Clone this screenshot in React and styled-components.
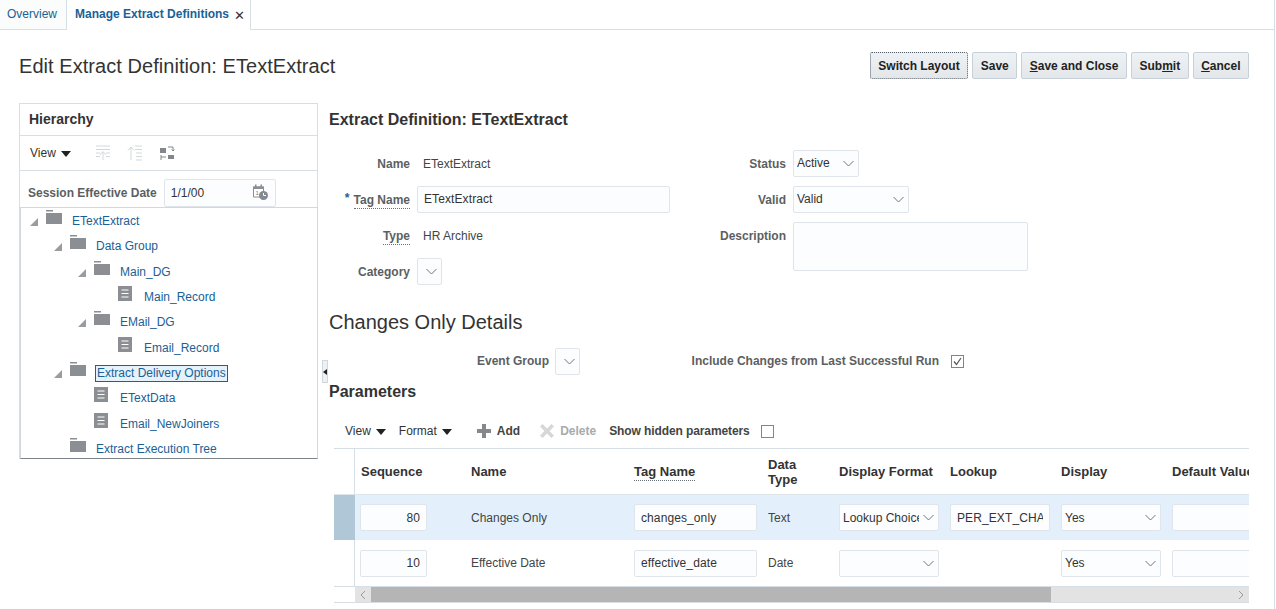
import styled, { createGlobalStyle } from "styled-components";

const GlobalStyle = createGlobalStyle`
  html, body {
    margin: 0;
    height: 609px;
    overflow: hidden;
    background: #fff;
    font-family: "Liberation Sans", Arial, sans-serif;
    font-size: 12px;
    color: #333;
  }
`;

const linkBlue = "#1a6196";
const line = "#d6dfe6";
const fieldLine = "#dfe5ea";

const Page = styled.div`
  width: 1274px;
  height: 609px;
  border-right: 1px solid ${line};
  overflow: hidden;
`;

const TabBar = styled.div`
  display: flex;
  height: 29px;
  border-bottom: 1px solid ${line};
`;

const Tab = styled.div`
  display: flex;
  align-items: center;
  height: ${(p) => (p.$active ? "30px" : "29px")};
  padding: ${(p) => (p.$active ? "0 5px 2px 8px" : "0 9px 2px 7px")};
  box-sizing: border-box;
  color: ${linkBlue};
  font-weight: ${(p) => (p.$active ? 700 : 400)};
  background: ${(p) => (p.$active ? "#fff" : "#fbfcfc")};
  border-left: ${(p) => (p.$active ? `1px solid ${line}` : "none")};
  border-right: ${(p) => (p.$active ? `1px solid ${line}` : "none")};
`;

const TabClose = styled.span`
  margin-left: 5px;
  margin-top: 3px;
  color: #333;
  font-size: 13px;
  font-weight: 400;
`;

const Header = styled.div`
  display: flex;
  align-items: center;
  justify-content: space-between;
  height: 27px;
  padding: 22px 25px 24px 19px;
`;

const Title = styled.h1`
  margin: 0;
  padding-top: 1px;
  font-size: 20px;
  font-weight: 400;
  letter-spacing: 0.05px;
  color: #333;
`;

const ButtonRow = styled.div`
  display: flex;
  gap: 4px;
`;

const Button = styled.button`
  height: 27px;
  padding: 0 7.5px;
  box-sizing: border-box;
  font: 700 12px "Liberation Sans", Arial, sans-serif;
  color: #222;
  background: linear-gradient(#eff2f4, #e3e7ea);
  border: 1px ${(p) => (p.$focused ? "dotted #55606a" : "solid #c7d0d8")};
  border-radius: 2px;
`;

const Body = styled.div`
  display: flex;
  padding-left: 19px;
`;

const LeftPanel = styled.div`
  width: 299px;
  height: 356px;
  box-sizing: border-box;
  border: 1px solid ${line};
  border-bottom: none;
  flex-shrink: 0;
`;

const PanelTitle = styled.div`
  display: flex;
  align-items: center;
  height: 32px;
  padding: 0 0 1px 9px;
  box-sizing: border-box;
  border-bottom: 1px solid ${line};
  font-size: 14px;
  font-weight: 700;
  color: #333;
`;

const PanelTools = styled.div`
  display: flex;
  align-items: center;
  height: 35px;
  padding-left: 10px;
  box-sizing: border-box;
  border-bottom: 1px solid ${line};
`;

const Menu = styled.span`
  display: inline-flex;
  align-items: center;
  gap: 5px;
  color: #333;
  margin-right: ${(p) => p.$gap || 0}px;
`;

const Caret = styled.i`
  display: inline-block;
  border-style: solid;
  border-width: 6px 5px 0;
  border-color: #222 transparent transparent;
  margin-top: 2px;
`;

const ToolIcon = styled.svg`
  width: 16px;
  height: 16px;
  margin-right: 16px;
`;

const DateRow = styled.div`
  display: flex;
  align-items: center;
  height: 36px;
  padding: 7px 0 0 8px;
  box-sizing: border-box;
`;

const BoldLabel = styled.span`
  font-weight: 700;
  color: #5c5f62;
`;

const DateField = styled.div`
  display: flex;
  align-items: center;
  justify-content: space-between;
  width: 112px;
  height: 28px;
  margin-left: 7px;
  padding: 0 6px;
  box-sizing: border-box;
  background: #fcfdfe;
  border: 1px solid ${fieldLine};
  border-radius: 2px;
`;

const Tree = styled.ul`
  position: relative;
  list-style: none;
  margin: 0 -1px 0 0;
  padding: 1px 0 0;
  height: 249px;
  overflow: hidden;
  background: #fff;
  border: 1px solid #d2d9de;
  border-bottom: 1px solid #7d858b;
`;

const TreeRow = styled.li`
  display: flex;
  align-items: flex-start;
  height: 25.35px;
  padding-left: ${(p) => 9 + p.$depth * 24}px;
  box-sizing: border-box;
`;

const Expander = styled.svg`
  width: 8px;
  height: 8px;
  margin: 9px 8px 0 0;
  flex-shrink: 0;
  visibility: ${(p) => (p.$hidden ? "hidden" : "visible")};
`;

const NodeIcon = styled.svg`
  flex-shrink: 0;
  width: 16px;
  height: 15px;
  margin: 1px 10px 0 0;
`;

const NodeText = styled.span`
  color: ${linkBlue};
  line-height: 15px;
  margin-top: 5px;
  padding: ${(p) => (p.$selected ? "0 1px" : "0")};
  white-space: nowrap;
  outline: ${(p) => (p.$selected ? `1px solid ${linkBlue}` : "none")};
  background: ${(p) => (p.$selected ? "#e6f2fb" : "none")};
`;

const SplitHandle = styled.div`
  flex-shrink: 0;
  display: flex;
  align-items: center;
  width: 6px;
  height: 23px;
  margin: 257px 0 0 4px;
  background: #eef1f4;
  border: 1px solid #cfd6dc;
  box-sizing: border-box;
  &::after {
    content: "";
    border-style: solid;
    border-width: 3px 4px 3px 0;
    border-color: transparent #222 transparent transparent;
  }
`;

const RightPane = styled.div`
  width: 920px;
  margin-left: 1px;
  flex-shrink: 0;
`;

const SectionTitle = styled.h2`
  margin: 1px 0 0;
  height: 32px;
  line-height: 32px;
  font-size: 16px;
  font-weight: 700;
  color: #333;
`;

const FieldLabel = styled.span`
  text-align: right;
  font-weight: 700;
  color: #5c5f62;
  white-space: nowrap;
`;

const HelpLabel = styled.span`
  border-bottom: 1px dotted #6b7378;
  padding-bottom: 1px;
`;

const Required = styled.span`
  color: ${linkBlue};
  margin-right: 4px;
  position: relative;
  top: -2px;
`;

const Value = styled.span`
  padding-left: 6px;
  color: #444;
`;

const TextInput = styled.input`
  display: block;
  width: ${(p) => p.$w}px;
  height: 27px;
  padding: 0 6px;
  box-sizing: border-box;
  font: 12px "Liberation Sans", Arial, sans-serif;
  letter-spacing: 0.1px;
  text-align: ${(p) => p.$align || "left"};
  color: #333;
  background: #fcfdfe;
  border: 1px solid ${fieldLine};
  border-radius: 2px;
  outline: none;
`;

const SelectBox = styled.div`
  display: flex;
  align-items: center;
  justify-content: space-between;
  width: ${(p) => p.$w}px;
  height: 27px;
  padding: 0 4px 0 3px;
  box-sizing: border-box;
  color: #333;
  background: #fcfdfe;
  border: 1px solid ${fieldLine};
  border-radius: 2px;
  overflow: hidden;
  white-space: nowrap;
`;

const SelectText = styled.span`
  overflow: hidden;
  width: ${(p) => (p.$clip ? "76px" : "auto")};
`;

const Chevron = styled.svg`
  width: 11px;
  height: 7px;
  flex-shrink: 0;
  margin-left: auto;
`;

const FormGrid = styled.div`
  display: grid;
  grid-template-columns: 81px 283px 79px auto;
  grid-auto-rows: 36px;
  column-gap: 7px;
  align-items: center;
  margin-top: 10px;
  & > ${TextInput}, & > ${SelectBox} {
    margin-bottom: 2px;
  }
`;

const DescriptionBox = styled.div`
  grid-row: span 2;
  align-self: start;
  width: 235px;
  height: 49px;
  margin-top: 4px;
  box-sizing: border-box;
  background: #fcfdfe;
  border: 1px solid ${fieldLine};
  border-radius: 2px;
`;

const LargeTitle = styled.h2`
  margin: 20px 0 0;
  height: 24px;
  line-height: 24px;
  font-size: 20px;
  font-weight: 400;
  color: #333;
`;

const EventRow = styled.div`
  display: flex;
  align-items: center;
  height: 28px;
  margin-top: 13px;
`;

const EventLabel = styled(BoldLabel)`
  width: ${(p) => p.$w}px;
  margin-right: ${(p) => p.$mr}px;
  text-align: right;
  white-space: nowrap;
`;

const Checkbox = styled.span`
  display: inline-flex;
  width: 13px;
  height: 13px;
  box-sizing: border-box;
  background: #fff;
  border: 1px solid #7f868b;
`;

const ParamsTitle = styled(SectionTitle)`
  height: 20px;
  line-height: 20px;
  margin-top: 7px;
`;

const TableTools = styled.div`
  display: flex;
  align-items: center;
  height: 34px;
  margin: 12px 0 0 5px;
  padding-left: 11px;
`;

const ToolAction = styled.span`
  display: inline-flex;
  align-items: center;
  gap: 6px;
  font-weight: 700;
  letter-spacing: ${(p) => p.$ls || 0}px;
  color: ${(p) => (p.$off ? "#a8abad" : "#444")};
  margin-right: ${(p) => p.$gap}px;
`;

const Table = styled.div`
  width: 915px;
  margin-left: 5px;
  border-top: 1px solid ${line};
  overflow: hidden;
`;

const Row = styled.div`
  display: grid;
  grid-template-columns: 21px 110px 163px 134px 71px 111px 111px 111px 120px;
  align-items: center;
  height: ${(p) => p.$h}px;
  background: ${(p) => (p.$selected ? "#e3f0fb" : "#fff")};
  border-bottom: ${(p) => (p.$head ? "1px solid #dde5eb" : "none")};
  box-sizing: border-box;
`;

const Selector = styled.div`
  align-self: stretch;
  background: ${(p) => (p.$selected ? "#b0c7d8" : "#fff")};
  border-right: 1px solid ${(p) => (p.$selected ? "#b0c7d8" : line)};
`;

const HeadCell = styled.div`
  padding-left: 6px;
  font-weight: 700;
  font-size: 13px;
  line-height: 15px;
  color: #333;
  white-space: nowrap;
`;

const Cell = styled.div`
  padding-left: ${(p) => p.$pad ?? 6}px;
  color: #444;
`;

const ScrollRow = styled.div`
  display: flex;
  height: 17px;
  border-top: 1px solid ${line};
  border-bottom: 1px solid ${line};
  box-sizing: border-box;
`;

const ScrollCorner = styled.div`
  width: 21px;
  flex-shrink: 0;
  background: #fff;
`;

const ScrollEnd = styled.div`
  display: flex;
  align-items: center;
  justify-content: center;
  width: ${(p) => p.$w}px;
  background: #e3e3e3;
`;

const ScrollThumb = styled.div`
  width: 680px;
  background: #b5b5b5;
`;

const ScrollTrack = styled.div`
  flex: 1;
  display: flex;
  align-items: center;
  justify-content: flex-end;
  padding-right: 5px;
  background: #e3e3e3;
`;

const treeNodes = [
  { depth: 0, kind: "folder", open: true, label: "ETextExtract" },
  { depth: 1, kind: "folder", open: true, label: "Data Group" },
  { depth: 2, kind: "folder", open: true, label: "Main_DG" },
  { depth: 3, kind: "doc", label: "Main_Record" },
  { depth: 2, kind: "folder", open: true, label: "EMail_DG" },
  { depth: 3, kind: "doc", label: "Email_Record" },
  { depth: 1, kind: "folder", open: true, label: "Extract Delivery Options", selected: true },
  { depth: 2, kind: "doc", label: "ETextData" },
  { depth: 2, kind: "doc", label: "Email_NewJoiners" },
  { depth: 1, kind: "folder", label: "Extract Execution Tree" },
];

const Arrow = () => (
  <Chevron viewBox="0 0 11 7">
    <path d="M.5 1l5 5 5-5" fill="none" stroke="#6f777d" strokeWidth="1" />
  </Chevron>
);

const Select = ({ w, text, clip }) => (
  <SelectBox $w={w}>
    {text && <SelectText $clip={clip}>{text}</SelectText>}
    <Arrow />
  </SelectBox>
);

const FolderIcon = () => (
  <NodeIcon viewBox="0 0 16 15">
    <path d="M0 0h7v1.5H0z M0 3h16V14H0z" fill="#8b8e93" />
  </NodeIcon>
);

const DocIcon = () => (
  <NodeIcon viewBox="0 0 16 15">
    <rect x="0" y="0" width="14" height="15" fill="#8b8e93" />
    <path d="M3.5 4h7M3.5 7.5h7M3.5 11h7" stroke="#fff" strokeWidth="1" />
  </NodeIcon>
);

const CalendarIcon = () => (
  <svg width="17" height="17" viewBox="0 0 17 17">
    <path d="M1.5 3h10v10h-10z" fill="#fff" stroke="#8b8e93" />
    <path d="M1 2.5h11V5H1z M3 .5h1.5V3H3z M8.5 .5H10V3H8.5z" fill="#8b8e93" />
    <text x="3.5" y="11" fontSize="6" fontFamily="Liberation Sans" fill="#777">1</text>
    <circle cx="11.5" cy="11.5" r="4.5" fill="#85898d" />
    <path d="M11.5 9v2.5h2.5" fill="none" stroke="#fff" />
  </svg>
);

const App = () => {
  return (
    <Page>
      <GlobalStyle />
      <TabBar>
        <Tab>Overview</Tab>
        <Tab $active>
          Manage Extract Definitions
          <TabClose>✕</TabClose>
        </Tab>
      </TabBar>

      <Header>
        <Title>Edit Extract Definition: ETextExtract</Title>
        <ButtonRow>
          <Button $focused>Switch Layout</Button>
          <Button>Save</Button>
          <Button><u>S</u>ave and Close</Button>
          <Button>Sub<u>m</u>it</Button>
          <Button><u>C</u>ancel</Button>
        </ButtonRow>
      </Header>

      <Body>
        <LeftPanel>
          <PanelTitle>Hierarchy</PanelTitle>
          <PanelTools>
            <Menu $gap={24}>View <Caret /></Menu>
            <ToolIcon viewBox="0 0 16 16">
              <path d="M1 1h14M1 4.5h14M11 8h4M11 11.5h4M1 8h4M1 11.5h4M8 15V7M5 10l3-3.5 3 3.5" stroke="#d4d7d9" fill="none" />
            </ToolIcon>
            <ToolIcon viewBox="0 0 16 16">
              <path d="M8 1h7M8 4.5h7M9 8h6M9 11.5h6M9 15h6M4 15V2M1 5.5L4 2l3 3.5" stroke="#d4d7d9" fill="none" />
            </ToolIcon>
            <ToolIcon viewBox="0 0 16 16">
              <path d="M1 3h6v5H1z M9 10h6v4H9z" fill="#83878b" />
              <path d="M9 2h5v4M12.5 4.5L14 6l1.5-1.5M2 10v5M2 12h5" stroke="#83878b" fill="none" />
            </ToolIcon>
          </PanelTools>
          <DateRow>
            <BoldLabel>Session Effective Date</BoldLabel>
            <DateField>
              1/1/00
              <CalendarIcon />
            </DateField>
          </DateRow>
          <Tree>
            {treeNodes.map((node) => (
              <TreeRow key={node.label} $depth={node.depth}>
                <Expander viewBox="0 0 8 8" $hidden={!node.open}>
                  <path d="M8 0v8H0z" fill="#9a9da0" />
                </Expander>
                {node.kind === "folder" ? <FolderIcon /> : <DocIcon />}
                <NodeText $selected={node.selected}>{node.label}</NodeText>
              </TreeRow>
            ))}
          </Tree>
        </LeftPanel>

        <SplitHandle />

        <RightPane>
          <SectionTitle>Extract Definition: ETextExtract</SectionTitle>
          <FormGrid>
            <FieldLabel>Name</FieldLabel>
            <Value>ETextExtract</Value>
            <FieldLabel>Status</FieldLabel>
            <Select w={66} text="Active" />

            <FieldLabel>
              <Required>*</Required>
              <HelpLabel>Tag Name</HelpLabel>
            </FieldLabel>
            <TextInput $w={253} defaultValue="ETextExtract" />
            <FieldLabel>Valid</FieldLabel>
            <Select w={116} text="Valid" />

            <FieldLabel>
              <HelpLabel>Type</HelpLabel>
            </FieldLabel>
            <Value>HR Archive</Value>
            <FieldLabel>Description</FieldLabel>
            <DescriptionBox />

            <FieldLabel>Category</FieldLabel>
            <Select w={25} />
          </FormGrid>

          <LargeTitle>Changes Only Details</LargeTitle>
          <EventRow>
            <EventLabel $w={220} $mr={6}>Event Group</EventLabel>
            <Select w={25} />
            <EventLabel $w={359} $mr={12}>Include Changes from Last Successful Run</EventLabel>
            <Checkbox>
              <svg width="11" height="11" viewBox="0 0 11 11">
                <path d="M2 5.5l2.5 3L9 2" fill="none" stroke="#555" strokeWidth="1.2" />
              </svg>
            </Checkbox>
          </EventRow>

          <ParamsTitle>Parameters</ParamsTitle>
          <TableTools>
            <Menu $gap={13}>View <Caret /></Menu>
            <Menu $gap={25}>Format <Caret /></Menu>
            <ToolAction $gap={20}>
              <svg width="14" height="14" viewBox="0 0 14 14">
                <path d="M5 0h4v5h5v4H9v5H5V9H0V5h5z" fill="#85898c" />
              </svg>
              Add
            </ToolAction>
            <ToolAction $off $gap={13}>
              <svg width="14" height="14" viewBox="0 0 14 14">
                <path d="M2.5 0L7 4.5 11.5 0 14 2.5 9.5 7l4.5 4.5-2.5 2.5L7 9.5 2.5 14 0 11.5 4.5 7 0 2.5z" fill="#d5d7d9" />
              </svg>
              Delete
            </ToolAction>
            <ToolAction $gap={11} $ls={-0.1}>Show hidden parameters</ToolAction>
            <Checkbox />
          </TableTools>

          <Table>
            <Row $h={46} $head>
              <Selector />
              <HeadCell>Sequence</HeadCell>
              <HeadCell>Name</HeadCell>
              <HeadCell><HelpLabel>Tag Name</HelpLabel></HeadCell>
              <HeadCell>Data<br />Type</HeadCell>
              <HeadCell>Display Format</HeadCell>
              <HeadCell>Lookup</HeadCell>
              <HeadCell>Display</HeadCell>
              <HeadCell>Default Value</HeadCell>
            </Row>
            <Row $h={45} $selected>
              <Selector $selected />
              <Cell $pad={5}><TextInput $w={67} $align="right" defaultValue="80" /></Cell>
              <Cell>Changes Only</Cell>
              <Cell><TextInput $w={123} defaultValue="changes_only" /></Cell>
              <Cell>Text</Cell>
              <Cell><Select w={100} text="Lookup Choices" clip /></Cell>
              <Cell><TextInput $w={100} defaultValue="PER_EXT_CHANGES" /></Cell>
              <Cell><Select w={100} text="Yes" /></Cell>
              <Cell><TextInput $w={100} /></Cell>
            </Row>
            <Row $h={46}>
              <Selector />
              <Cell $pad={5}><TextInput $w={67} $align="right" defaultValue="10" /></Cell>
              <Cell>Effective Date</Cell>
              <Cell><TextInput $w={123} defaultValue="effective_date" /></Cell>
              <Cell>Date</Cell>
              <Cell><Select w={100} /></Cell>
              <Cell />
              <Cell><Select w={100} text="Yes" /></Cell>
              <Cell><TextInput $w={100} /></Cell>
            </Row>
            <ScrollRow>
              <ScrollCorner />
              <ScrollEnd $w={16}>
                <svg width="6" height="10" viewBox="0 0 6 10">
                  <path d="M5 1L1 5l4 4" fill="none" stroke="#9a9a9a" />
                </svg>
              </ScrollEnd>
              <ScrollThumb />
              <ScrollTrack>
                <svg width="6" height="10" viewBox="0 0 6 10">
                  <path d="M1 1l4 4-4 4" fill="none" stroke="#9a9a9a" />
                </svg>
              </ScrollTrack>
            </ScrollRow>
          </Table>
        </RightPane>
      </Body>
    </Page>
  );
};

export default App;
